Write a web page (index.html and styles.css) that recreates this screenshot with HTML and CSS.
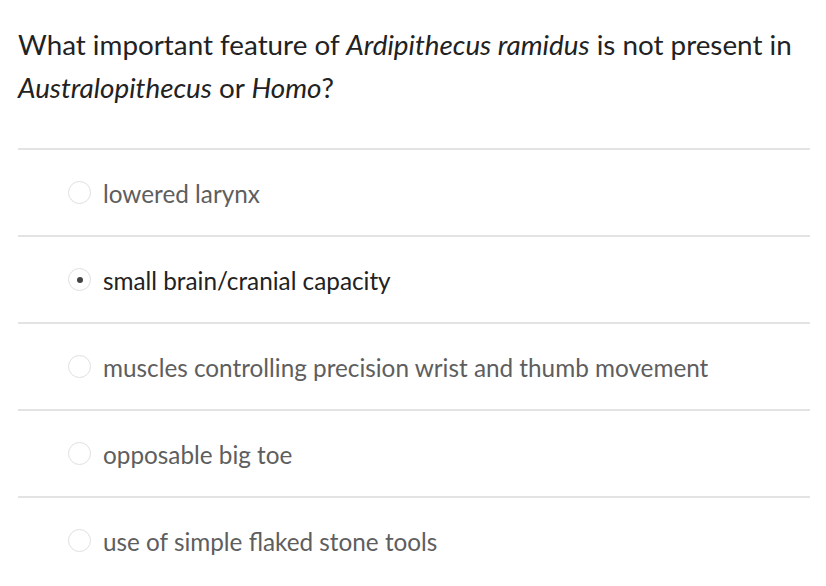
FILE: index.html
```html
<!DOCTYPE html>
<html>
<head>
<meta charset="utf-8">
<link rel="stylesheet" href="styles.css">
</head>
<body>
<div class="quiz">
  <p class="question">What important feature of <em>Ardipithecus ramidus</em> is not present in <em>Australopithecus</em> or <em>Homo</em>?</p>
  <ul class="options">
    <li class="option"><span class="radio"></span><span class="label">lowered larynx</span></li>
    <li class="option selected"><span class="radio"></span><span class="label">small brain/cranial capacity</span></li>
    <li class="option"><span class="radio"></span><span class="label">muscles controlling precision wrist and thumb movement</span></li>
    <li class="option"><span class="radio"></span><span class="label">opposable big toe</span></li>
    <li class="option"><span class="radio"></span><span class="label">use of simple flaked stone tools</span></li>
  </ul>
</div>
</body>
</html>
```
FILE: styles.css
```css
html, body {
  margin: 0;
  padding: 0;
  background: #fff;
}
body {
  font-family: Lato, "Open Sans", sans-serif;
}
.quiz {
  padding: 23px 16px 0 18px;
}
.question {
  margin: 0;
  font-size: 27.8px;
  line-height: 43px;
  color: #222;
}
.question em {
  font-style: italic;
}
.options {
  list-style: none;
  margin: 39px 0 0 0;
  padding: 0;
}
.option {
  display: flex;
  align-items: center;
  height: 85px;
  border-top: 2px solid #e3e3e3;
  padding-left: 50px;
}
.radio {
  width: 21px;
  height: 21px;
  border: 1px solid #e0e0e0;
  border-radius: 50%;
  margin-right: 12px;
  display: flex;
  align-items: center;
  justify-content: center;
  box-sizing: content-box;
}
.selected .radio::after {
  content: "";
  width: 6px;
  height: 6px;
  border-radius: 50%;
  background: #444;
}
.label {
  font-size: 24.3px;
  color: #5e5e5e;
  margin-top: 2px;
}
.selected .label {
  color: #222;
}
```
